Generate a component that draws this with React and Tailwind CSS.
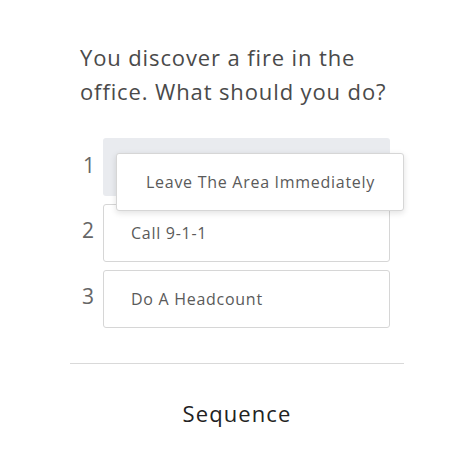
import React from 'react';

const options = [
  { id: 2, label: 'Call 9-1-1' },
  { id: 3, label: 'Do A Headcount' },
];

const App = () => {
  return (
    <div className="w-[474px] h-[473px] bg-white font-['Open_Sans',sans-serif] overflow-hidden">
      {/* Question */}
      <div className="pt-[40px] pl-[80px]">
        <h1 className="text-[22px] leading-[34px] text-[#4a4a4a] font-normal tracking-[0.04em]">
          You discover a fire in the
          <br />
          office. What should you do?
        </h1>
      </div>

      {/* Sortable list */}
      <div className="mt-[30px] pl-[80px] flex flex-col gap-[8px]">
        <div className="relative flex items-center">
          <span className="w-[23px] text-[21px] text-[#666] pl-[3px] -mt-[2px]">1</span>
          <div className="w-[287px] h-[58px] rounded-[3px] bg-[#e9ebef]" />
          {/* dragged card */}
          <div className="absolute left-[36px] top-[15px] w-[288px] h-[58px] bg-white border border-[#d6d6d6] rounded-[3px] shadow-[0_2px_6px_rgba(0,0,0,0.12)] flex items-center pl-[29px]">
            <span className="text-[16px] text-[#5a5a5a] tracking-[0.045em]">Leave The Area Immediately</span>
          </div>
        </div>
        {options.map((o) => (
          <div key={o.id} className="flex items-center">
            <span className="w-[23px] text-[21px] text-[#666] pl-[2px] -mt-[4px]">{o.id}</span>
            <div className="w-[287px] h-[58px] rounded-[3px] border border-[#d6d6d6] bg-white flex items-center pl-[27px]">
              <span className="text-[16px] text-[#5a5a5a] tracking-[0.045em]">{o.label}</span>
            </div>
          </div>
        ))}
      </div>

      {/* Divider */}
      <div className="mt-[35px] mx-[70px] h-px bg-[#d9d9d9]" />

      {/* Footer */}
      <div className="mt-[33px] text-center text-[22px] text-[#222] tracking-[0.05em]">Sequence</div>
    </div>
  );
};

export default App;
